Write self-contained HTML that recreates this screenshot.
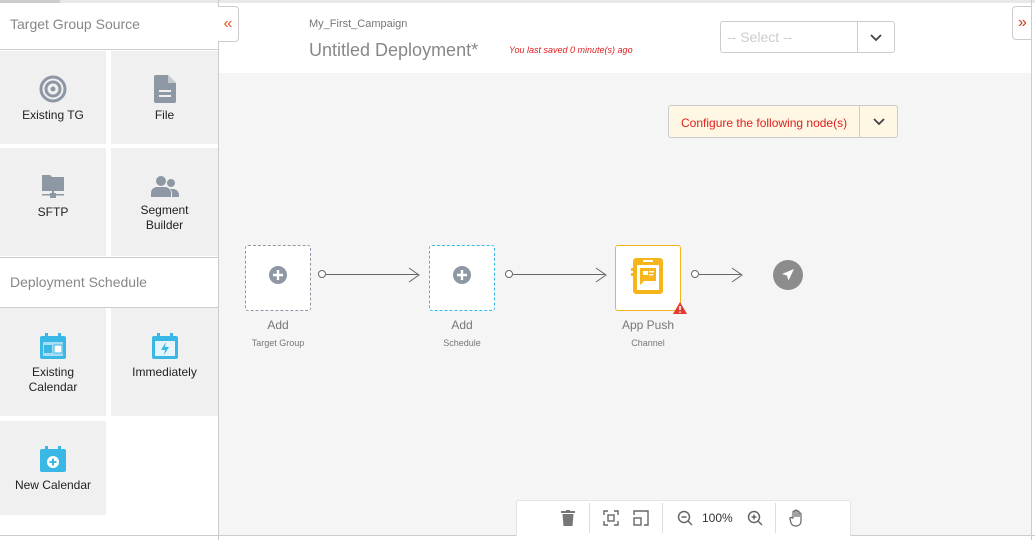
<!DOCTYPE html>
<html><head><meta charset="utf-8"><style>
*{box-sizing:border-box;margin:0;padding:0}
body{width:1035px;height:540px;position:relative;overflow:hidden;background:#fff;font-family:"Liberation Sans",sans-serif;}
.a{position:absolute}
.tile{position:absolute;background:#f0f0f0;text-align:center;font-size:12px;color:#222;line-height:15px}
.tile svg{display:block;margin:0 auto 5px}
.hd{position:absolute;left:0;width:218px;height:50px;font-size:14px;color:#888;padding:16px 0 0 10px;border-bottom:1px solid #ccc}
.node{position:absolute;width:66px;height:66px;background:#fff;border-radius:3px}
.lbl{position:absolute;text-align:center;width:100px;font-size:12px;color:#777}
.sub{position:absolute;text-align:center;width:100px;font-size:9px;color:#777}
.line{position:absolute;height:1px;background:#666}
.dot{position:absolute;width:8px;height:8px;border:1px solid #666;border-radius:50%;background:#fff}
</style></head><body>
<div class="a" style="left:0;top:0;width:1035px;height:3px;background:#e8e8e8"></div>
<div class="a" style="left:0;top:0;width:60px;height:3px;background:#ccc"></div>
<div class="a" style="left:218px;top:0;width:1px;height:540px;background:#ccc"></div>
<div class="hd" style="top:3px;height:47px;padding-top:13px">Target Group Source</div>
<div class="tile" style="left:0;top:51px;width:106px;height:93px;padding-top:24px">
<svg width="28" height="28" viewBox="0 0 28 28"><circle cx="14" cy="14" r="12" fill="none" stroke="#8e97a4" stroke-width="3"/><circle cx="14" cy="14" r="7" fill="none" stroke="#8e97a4" stroke-width="3"/><circle cx="14" cy="14" r="2.5" fill="#8e97a4"/></svg>Existing TG</div>
<div class="tile" style="left:111px;top:51px;width:107px;height:93px;padding-top:24px">
<svg width="22" height="28" viewBox="0 0 22 28"><path d="M2 0h12l8 8v18a2 2 0 0 1-2 2H2a2 2 0 0 1-2-2V2a2 2 0 0 1 2-2z" fill="#8e97a4"/><path d="M14 0v8h8" fill="#c4c9d0"/><rect x="5" y="15" width="12" height="2" fill="#f0f0f0"/><rect x="5" y="20" width="12" height="2" fill="#f0f0f0"/></svg>File</div>
<div class="tile" style="left:0;top:148px;width:106px;height:108px;padding-top:24px">
<svg width="22" height="28" viewBox="0 0 22 26"><path d="M0 2h8l2 2h12v14H0z" fill="#8e97a4"/><rect x="10" y="18" width="2" height="4" fill="#8e97a4"/><rect x="0" y="21" width="22" height="1.5" fill="#8e97a4"/><rect x="8" y="20" width="6" height="5" fill="#8e97a4"/></svg>SFTP</div>
<div class="tile" style="left:111px;top:148px;width:107px;height:108px;padding-top:26px">
<svg width="28" height="24" viewBox="0 0 28 22"><circle cx="10" cy="6" r="5" fill="#8e97a4"/><circle cx="20" cy="8" r="4" fill="#8e97a4"/><path d="M0 22v-4a6 6 0 0 1 6-6h8a6 6 0 0 1 6 6v4z" fill="#8e97a4"/><path d="M21 22v-4a6 6 0 0 0-2-4h3a6 6 0 0 1 6 6v2z" fill="#8e97a4"/></svg>Segment<br>Builder</div>
<div class="hd" style="top:257px;border-top:1px solid #ccc;height:51px">Deployment Schedule</div>
<div class="tile" style="left:0;top:308px;width:106px;height:108px;padding-top:24px">
<svg width="26" height="28" viewBox="0 0 26 26"><rect x="0" y="3" width="26" height="23" rx="2" fill="#39b8e6"/><rect x="5" y="0" width="3" height="5" fill="#39b8e6"/><rect x="18" y="0" width="3" height="5" fill="#39b8e6"/><rect x="3" y="9" width="20" height="14" fill="#a8def3"/><rect x="4" y="12" width="8" height="8" fill="#39b8e6"/><rect x="14" y="12" width="8" height="8" fill="#fff" stroke="#39b8e6"/></svg>Existing<br>Calendar</div>
<div class="tile" style="left:111px;top:308px;width:107px;height:108px;padding-top:24px">
<svg width="26" height="28" viewBox="0 0 26 26"><rect x="0" y="3" width="26" height="23" rx="2" fill="#39b8e6"/><rect x="5" y="0" width="3" height="5" fill="#39b8e6"/><rect x="18" y="0" width="3" height="5" fill="#39b8e6"/><rect x="3" y="8" width="20" height="15" fill="#e6f5fb"/><path d="M14 9l-5 8h4l-1 5 5-8h-4z" fill="#39b8e6"/></svg>Immediately</div>
<div class="tile" style="left:0;top:421px;width:106px;height:94px;padding-top:24px">
<svg width="26" height="28" viewBox="0 0 26 26"><rect x="0" y="3" width="26" height="23" rx="2" fill="#39b8e6"/><rect x="5" y="0" width="3" height="5" fill="#39b8e6"/><rect x="18" y="0" width="3" height="5" fill="#39b8e6"/><circle cx="13" cy="16" r="6" fill="#fff"/><path d="M13 12.5v7M9.5 16h7" stroke="#39b8e6" stroke-width="2"/></svg>New Calendar</div>
<div class="a" style="left:218px;top:6px;width:21px;height:36px;background:#fff;border:1px solid #ccc;border-left:none;border-radius:0 4px 4px 0;color:#e0582a;font-size:16px;text-align:center;line-height:34px">«</div>
<div class="a" style="left:1012px;top:6px;width:20px;height:34px;background:#fff;border:1px solid #ccc;border-right:none;border-radius:4px 0 0 4px;color:#c8401e;font-size:16px;text-align:center;line-height:32px">»</div>
<div class="a" style="left:1031px;top:0;width:1px;height:540px;background:#ccc"></div>
<div class="a" style="left:219px;top:73px;width:812px;height:462px;background:#f5f5f5"></div>
<div class="a" style="left:0;top:535px;width:1035px;height:1px;background:#ccc"></div>
<div class="a" style="left:309px;top:18px;font-size:11px;color:#777">My_First_Campaign</div>
<div class="a" style="left:309px;top:40px;font-size:18px;color:#888">Untitled Deployment*</div>
<div class="a" style="left:509px;top:45px;font-size:9px;color:#e02020;font-style:italic">You last saved 0 minute(s) ago</div>
<div class="a" style="left:720px;top:21px;width:175px;height:32px;border:1px solid #ccc;border-radius:3px;background:#fff">
<div class="a" style="left:6px;top:7px;font-size:14px;color:#ccc">-- Select --</div>
<div class="a" style="left:136px;top:0;width:1px;height:30px;background:#ccc"></div>
<svg class="a" style="left:149px;top:10px" width="12" height="10" viewBox="0 0 12 10"><path d="M1 3l5 5 5-5" fill="none" stroke="#444" stroke-width="1.8"/></svg></div>
<div class="a" style="left:668px;top:105px;width:230px;height:33px;border:1px solid #ccc;border-radius:3px;background:#fdf7e3">
<div class="a" style="left:12px;top:10px;font-size:12px;color:#e02020">Configure the following node(s)</div>
<div class="a" style="left:190px;top:0;width:1px;height:31px;background:#ccc"></div>
<svg class="a" style="left:204px;top:10px" width="12" height="10" viewBox="0 0 12 10"><path d="M1 3l5 5 5-5" fill="none" stroke="#444" stroke-width="1.8"/></svg></div>
<div class="node" style="left:245px;top:245px;border:1px dashed #8e97a4"></div>
<svg class="a" style="left:269px;top:266px" width="18" height="18" viewBox="0 0 18 18"><circle cx="9" cy="9" r="9" fill="#8e97a4"/><path d="M9 4v10M4 9h10" stroke="#fff" stroke-width="2.4"/></svg>
<div class="lbl" style="left:228px;top:318px">Add</div><div class="sub" style="left:228px;top:338px">Target Group</div>
<div class="dot" style="left:318px;top:270px"></div><div class="line" style="left:326px;top:274px;width:92px"></div>
<svg class="a" style="left:408px;top:267px" width="12" height="16" viewBox="0 0 12 16"><path d="M1 1l10 7-10 7" fill="none" stroke="#666"/></svg>
<div class="node" style="left:429px;top:245px;border:1px dashed #39b8e6"></div>
<svg class="a" style="left:453px;top:266px" width="18" height="18" viewBox="0 0 18 18"><circle cx="9" cy="9" r="9" fill="#8e97a4"/><path d="M9 4v10M4 9h10" stroke="#fff" stroke-width="2.4"/></svg>
<div class="lbl" style="left:412px;top:318px">Add</div><div class="sub" style="left:412px;top:338px">Schedule</div>
<div class="dot" style="left:505px;top:270px"></div><div class="line" style="left:513px;top:274px;width:92px"></div>
<svg class="a" style="left:595px;top:267px" width="12" height="16" viewBox="0 0 12 16"><path d="M1 1l10 7-10 7" fill="none" stroke="#666"/></svg>
<div class="node" style="left:615px;top:245px;border:1px solid #f5b51b"></div>
<svg class="a" style="left:631px;top:258px" width="34" height="36" viewBox="0 0 34 36"><rect x="2" y="0" width="30" height="36" rx="3" fill="#f5b51b"/><rect x="12" y="2" width="10" height="2" fill="#fff"/><rect x="6" y="7" width="22" height="25" fill="#fff"/><path d="M9 10h16v13H13l-4 4z" fill="#f5b51b"/><rect x="12" y="13" width="5" height="4" fill="#fff"/><rect x="18" y="13" width="5" height="1.5" fill="#fff"/><rect x="18" y="16" width="4" height="1.5" fill="#fff"/><rect x="0" y="10" width="2" height="3" fill="#f5b51b"/><rect x="0" y="15" width="2" height="3" fill="#f5b51b"/></svg>
<svg class="a" style="left:673px;top:302px" width="14" height="12" viewBox="0 0 14 12"><path d="M7 0l7 12H0z" fill="#e03c31"/><path d="M7 4v4M7 9.5v1.2" stroke="#fff" stroke-width="1.6"/></svg>
<div class="lbl" style="left:598px;top:318px">App Push</div><div class="sub" style="left:598px;top:338px">Channel</div>
<div class="dot" style="left:691px;top:270px"></div><div class="line" style="left:699px;top:274px;width:42px"></div>
<svg class="a" style="left:731px;top:267px" width="12" height="16" viewBox="0 0 12 16"><path d="M1 1l10 7-10 7" fill="none" stroke="#666"/></svg>
<svg class="a" style="left:773px;top:260px" width="30" height="30" viewBox="0 0 30 30"><circle cx="15" cy="15" r="15" fill="#8c8c8c"/><path d="M21 9l-12 5 5 1.5 1.5 5z" fill="#fff"/></svg>
<div class="a" style="left:516px;top:500px;width:335px;height:36px;background:#fff;border:1px solid #e4e4e4;border-bottom:none;border-radius:3px 3px 0 0">
<div class="a" style="left:72px;top:2px;width:1px;height:30px;background:#ddd"></div>
<div class="a" style="left:145px;top:2px;width:1px;height:30px;background:#ddd"></div>
<div class="a" style="left:258px;top:2px;width:1px;height:30px;background:#ddd"></div>
<svg class="a" style="left:44px;top:9px" width="14" height="16" viewBox="0 0 14 16"><rect x="0" y="1" width="14" height="2" fill="#777"/><rect x="5" y="0" width="4" height="2" fill="#777"/><path d="M1.5 4h11l-1 12h-9z" fill="#777"/></svg>
<svg class="a" style="left:86px;top:9px" width="16" height="16" viewBox="0 0 16 16" fill="none" stroke="#666" stroke-width="1.4"><path d="M1 5V1h4M11 1h4v4M15 11v4h-4M5 15H1v-4"/><rect x="5" y="5" width="6" height="6"/></svg>
<svg class="a" style="left:116px;top:9px" width="16" height="16" viewBox="0 0 16 16" fill="none" stroke="#666" stroke-width="1.4"><path d="M1 5V1h14v14h-4"/><rect x="1" y="8" width="7" height="7"/></svg>
<svg class="a" style="left:160px;top:9px" width="16" height="16" viewBox="0 0 16 16" fill="none" stroke="#666" stroke-width="1.5"><circle cx="7" cy="7" r="5.5"/><path d="M11 11l4 4M4.5 7h5"/></svg>
<div class="a" style="left:185px;top:10px;font-size:12px;color:#333">100%</div>
<svg class="a" style="left:230px;top:9px" width="16" height="16" viewBox="0 0 16 16" fill="none" stroke="#666" stroke-width="1.5"><circle cx="7" cy="7" r="5.5"/><path d="M11 11l4 4M4.5 7h5M7 4.5v5"/></svg>
<svg class="a" style="left:272px;top:8px" width="16" height="18" viewBox="0 0 16 18" fill="none" stroke="#666" stroke-width="1.2"><path d="M4 9V3a1 1 0 0 1 2 0v5V2a1 1 0 0 1 2 0v6V3a1 1 0 0 1 2 0v5V5a1 1 0 0 1 2 0v7c0 3-2 5-5 5s-4-1-5-3L1 10a1 1 0 0 1 2-1z"/></svg>
</div>
</body></html>
